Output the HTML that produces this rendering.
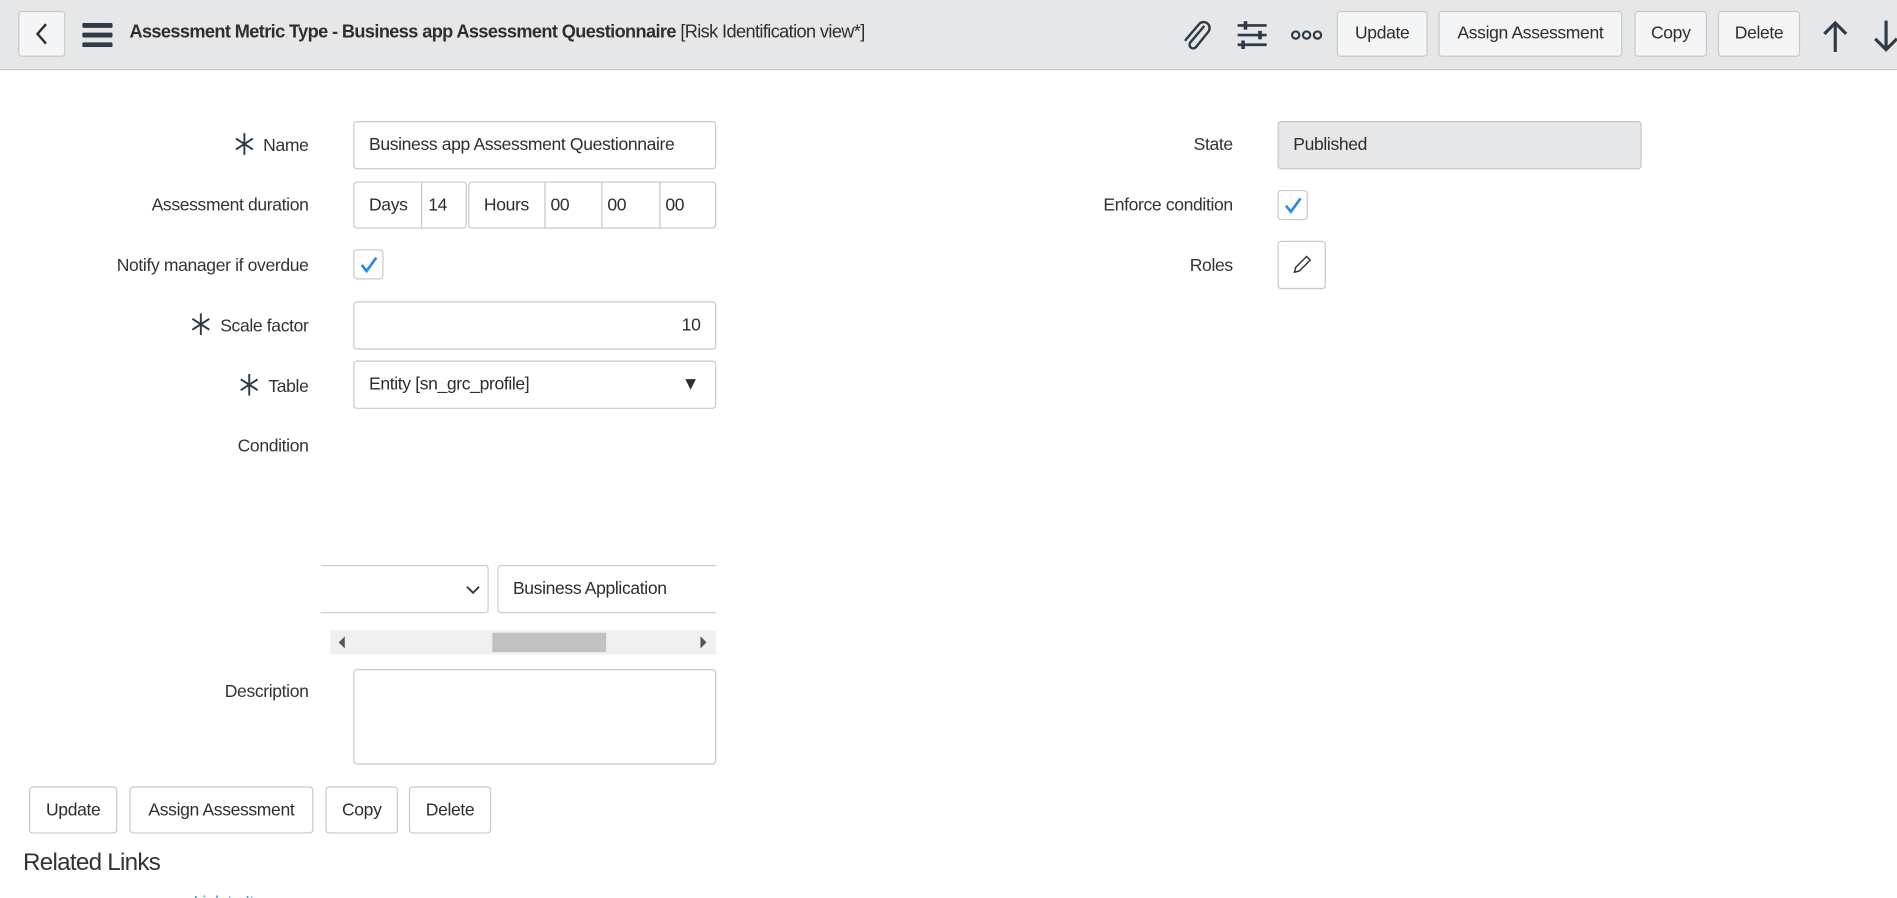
<!DOCTYPE html>
<html><head><meta charset="utf-8"><style>
html,body{margin:0;padding:0;width:1897px;height:898px;overflow:hidden;background:#fff}
#w{position:absolute;left:0;top:0;width:1568px;height:742px;overflow:hidden;transform:scale(1.2098);transform-origin:0 0;font-family:"Liberation Sans",sans-serif;color:#2e2e2e;font-size:14px;letter-spacing:-0.3px}
.a{position:absolute;box-sizing:border-box}
.hdr{left:0;top:0;width:1568px;height:58px;background:#e6e7e9;border-bottom:1px solid #c8c8c8}
.btn{border:1px solid #c9c9c9;border-radius:3px;background:#f4f5f6;display:flex;align-items:center;justify-content:center;font-size:14.5px;color:#2e2e2e}
.wbtn{background:#fff}
.inp{border:1px solid #c9c9c9;border-radius:3px;background:#fff;display:flex;align-items:center;padding-left:12px;font-size:14.5px}
.lbl{text-align:right;font-size:14.5px;color:#333;line-height:20px}
.ast{display:inline-block;vertical-align:-3px;margin-right:8px}
.cb{border:1px solid #c9c9c9;border-radius:3px;background:#fff}
</style></head><body><div id="w">
<div class="a hdr"></div>
<div class="a btn" style="left:15px;top:9px;width:39px;height:38px"><svg width="14" height="20" viewBox="0 0 14 20"><path d="M10 2 L3 10 L10 18" stroke="#2e2e2e" stroke-width="2" fill="none"/></svg></div>
<svg class="a" style="left:68px;top:19px" width="26" height="20"><rect x="0" y="0" width="25" height="4" rx="1" fill="#2e3a46"/><rect x="0" y="8" width="25" height="4" rx="1" fill="#2e3a46"/><rect x="0" y="16" width="25" height="4" rx="1" fill="#2e3a46"/></svg>
<div class="a" style="left:107px;top:18px;font-size:15px;white-space:nowrap;letter-spacing:-0.5px"><b style="color:#2e2e2e">Assessment Metric Type - Business app Assessment Questionnaire</b> <span>[Risk Identification view*]</span></div>
<svg class="a" style="left:975px;top:16px" width="28" height="28" viewBox="0 0 28 28"><path d="M20 6 L9 19 a3 3 0 0 0 4.5 4 L24 10 a5 5 0 0 0 -7.5 -6.5 L5 17" stroke="#2e3a46" stroke-width="2" fill="none" stroke-linecap="round"/></svg>
<svg class="a" style="left:1021px;top:16px" width="28" height="28" viewBox="0 0 28 28"><g stroke="#2e3a46" stroke-width="2.2"><path d="M2 5h24M2 13h24M2 21h24"/></g><g fill="#2e3a46"><rect x="7" y="1.5" width="3" height="7"/><rect x="19" y="9.5" width="3" height="7"/><rect x="5" y="17.5" width="3" height="7"/></g></svg>
<svg class="a" style="left:1067px;top:24px" width="28" height="10"><circle cx="4" cy="5" r="3" stroke="#2e3a46" stroke-width="1.8" fill="none"/><circle cx="13" cy="5" r="3" stroke="#2e3a46" stroke-width="1.8" fill="none"/><circle cx="22" cy="5" r="3" stroke="#2e3a46" stroke-width="1.8" fill="none"/></svg>
<div class="a btn" style="left:1105px;top:9px;width:75px;height:38px">Update</div>
<div class="a btn" style="left:1189px;top:9px;width:152px;height:38px">Assign Assessment</div>
<div class="a btn" style="left:1351px;top:9px;width:60px;height:38px">Copy</div>
<div class="a btn" style="left:1420px;top:9px;width:68px;height:38px">Delete</div>
<svg class="a" style="left:1505px;top:16px" width="24" height="28"><path d="M12 27V3M3 12l9-9 9 9" stroke="#2e3a46" stroke-width="2.6" fill="none"/></svg>
<svg class="a" style="left:1547px;top:16px" width="24" height="28"><path d="M12 1v24M3 16l9 9 9-9" stroke="#2e3a46" stroke-width="2.6" fill="none"/></svg>

<div class="a lbl" style="left:0;width:255px;top:110px"><svg class="ast" width="16" height="18" viewBox="0 0 16 18"><path d="M8 0V18M1 4.5L15 13.5M15 4.5L1 13.5" stroke="#2e3a46" stroke-width="1.6"/></svg>Name</div>
<div class="a inp" style="left:292px;top:100px;width:300px;height:40px">Business app Assessment Questionnaire</div>
<div class="a lbl" style="left:0;width:255px;top:160px">Assessment duration</div>
<div class="a inp" style="left:292px;top:150px;width:57px;height:39px;border-radius:3px 0 0 3px">Days</div>
<div class="a inp" style="left:348px;top:150px;width:38px;height:39px;padding-left:5px;border-radius:0 3px 3px 0">14</div>
<div class="a inp" style="left:387px;top:150px;width:64px;height:39px;border-radius:3px 0 0 3px">Hours</div>
<div class="a inp" style="left:450px;top:150px;width:48px;height:39px;padding-left:4px;border-radius:0">00</div>
<div class="a inp" style="left:497px;top:150px;width:49px;height:39px;padding-left:4px;border-radius:0">00</div>
<div class="a inp" style="left:545px;top:150px;width:47px;height:39px;padding-left:4px;border-radius:0 3px 3px 0">00</div>
<div class="a lbl" style="left:0;width:255px;top:210px">Notify manager if overdue</div>
<div class="a cb" style="left:292px;top:206px;width:25px;height:25px"><svg width="23" height="23"><path d="M6 12l4 5 8-11" stroke="#2b8ae8" stroke-width="2.2" fill="none"/></svg></div>
<div class="a lbl" style="left:0;width:255px;top:259px"><svg class="ast" width="16" height="18" viewBox="0 0 16 18"><path d="M8 0V18M1 4.5L15 13.5M15 4.5L1 13.5" stroke="#2e3a46" stroke-width="1.6"/></svg>Scale factor</div>
<div class="a inp" style="left:292px;top:249px;width:300px;height:40px;justify-content:flex-end;padding-right:12px">10</div>
<div class="a lbl" style="left:0;width:255px;top:309px"><svg class="ast" width="16" height="18" viewBox="0 0 16 18"><path d="M8 0V18M1 4.5L15 13.5M15 4.5L1 13.5" stroke="#2e3a46" stroke-width="1.6"/></svg>Table</div>
<div class="a inp" style="left:292px;top:298px;width:300px;height:40px">Entity [sn_grc_profile]<span style="position:absolute;right:13px;top:10px;font-size:15px">▼</span></div>
<div class="a lbl" style="left:0;width:255px;top:359px">Condition</div>
<div class="a inp" style="left:265px;top:467px;width:139px;height:40px;border-left:none;border-radius:0 3px 3px 0"><svg style="position:absolute;right:6px;top:16px" width="12" height="8"><path d="M1 1l5 5 5-5" stroke="#333" stroke-width="1.5" fill="none"/></svg></div>
<div class="a inp" style="left:411px;top:467px;width:181px;height:40px;border-right:none;border-radius:3px 0 0 3px">Business Application</div>
<div class="a" style="left:273px;top:521px;width:319px;height:20px;background:#f0f0f0"></div>
<div class="a" style="left:407px;top:523px;width:94px;height:16px;background:#c1c1c1"></div>
<div class="a" style="left:280px;top:526px;width:0;height:0;border-top:5px solid transparent;border-bottom:5px solid transparent;border-right:5px solid #555"></div>
<div class="a" style="left:579px;top:526px;width:0;height:0;border-top:5px solid transparent;border-bottom:5px solid transparent;border-left:5px solid #555"></div>
<div class="a lbl" style="left:0;width:255px;top:562px">Description</div>
<div class="a inp" style="left:292px;top:553px;width:300px;height:79px"></div>
<div class="a btn wbtn" style="left:24px;top:650px;width:73px;height:39px">Update</div>
<div class="a btn wbtn" style="left:107px;top:650px;width:152px;height:39px">Assign Assessment</div>
<div class="a btn wbtn" style="left:269px;top:650px;width:60px;height:39px">Copy</div>
<div class="a btn wbtn" style="left:338px;top:650px;width:68px;height:39px">Delete</div>
<div class="a" style="left:19px;top:702px;font-size:20px;color:#333;letter-spacing:-0.6px">Related Links</div>
<div class="a" style="left:160px;top:737px;font-size:14px;color:#1f7fd6">Link to Item</div>

<div class="a lbl" style="left:800px;width:219px;top:110px">State</div>
<div class="a inp" style="left:1056px;top:100px;width:301px;height:40px;background:#e6e7e9;border-color:#c6c6c6">Published</div>
<div class="a lbl" style="left:800px;width:219px;top:160px">Enforce condition</div>
<div class="a cb" style="left:1056px;top:157px;width:25px;height:25px"><svg width="23" height="23"><path d="M6 12l4 5 8-11" stroke="#2b8ae8" stroke-width="2.2" fill="none"/></svg></div>
<div class="a lbl" style="left:800px;width:219px;top:210px">Roles</div>
<div class="a btn wbtn" style="left:1056px;top:199px;width:40px;height:40px"><svg width="18" height="18" viewBox="0 0 18 18"><path d="M13 2l3 3-9 9-4 1 1-4z" stroke="#333" stroke-width="1.2" fill="none"/></svg></div>
</div></body></html>
